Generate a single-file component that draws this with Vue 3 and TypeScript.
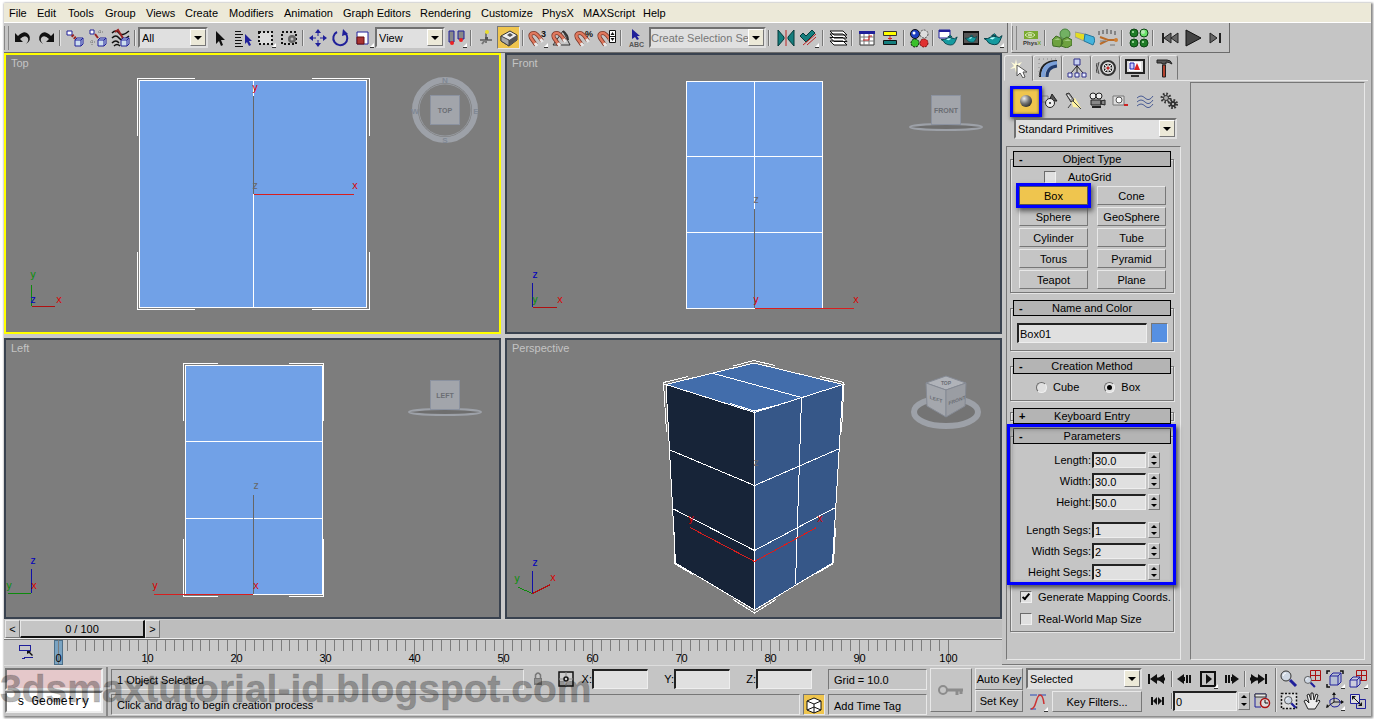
<script setup lang="ts">
import { ref } from 'vue'

const menus = ['File', 'Edit', 'Tools', 'Group', 'Views', 'Create', 'Modifiers', 'Animation', 'Graph Editors', 'Rendering', 'Customize', 'PhysX', 'MAXScript', 'Help']

const fly = '<path d="M20 15v4h-4z" fill="#fff"/><path d="M20 19v1h-4v-1z" fill="#333"/>'
const magnet = '<g fill="none"><path d="M8 17L3 10Q1 5 6 5Q9 5 14 13" stroke="#7a3526" stroke-width="4"/><path d="M8 17L3 10Q1 5 6 5Q9 5 14 13" stroke="#e0795e" stroke-width="2.500"/><path d="M7 15l2 3M12.500 11l2 3" stroke="#e8e8e8" stroke-width="3"/></g>'
const teapot = '<path d="M4 10Q10 6 16 9l3-2-2 5Q15 18 8 16Q4 15 3 12L0 10z" fill="#159a9f" stroke="#063f48"/><path d="M8 7l3-2 2 2z" fill="#1aa" stroke="#063f48"/><path d="M6 10q3-2 6-1l-3 2z" fill="#b8ffff"/>'
const lens = '<path d="M11 11l6 6" stroke="#20209a" stroke-width="3"/><circle cx="7" cy="7" r="5" fill="#cfd8e4" stroke="#333" /><path d="M4 7q1-3 3-3" stroke="#fff" fill="none"/>'

const icons: Record<string, string> = {
  undo: '<path d="M2 5v9h8l-3-3q4-4 7-2q3 3-1 7q6-4 3-9q-4-6-11 1z" fill="#111"/>',
  redo: '<path d="M18 5v9h-8l3-3q-4-4-7-2q-3 3 1 7q-6-4-3-9q4-6 11 1z" fill="#111"/>',
  link: '<path d="M2 3h5v4H2z" fill="#fff" stroke="#20209a"/><path d="M7 7l6 6" stroke="#922" stroke-width="3" stroke-dasharray="2 1"/><path d="M10 12h6v6h-6zM10 12l2-2h6v6l-2 2M16 12l2-2" fill="#cde" stroke="#20209a"/>',
  unlink: '<path d="M2 2h4v4H2z" fill="#fff" stroke="#20209a"/><path d="M7 6l3 4" stroke="#922" stroke-width="2"/><path d="M12 2v4M10 4h5M4 12v5M2 14h5" stroke="#777" stroke-dasharray="1 1"/><path d="M10 12h6v6h-6zM10 12l2-2h6v6l-2 2M16 12l2-2" fill="#cde" stroke="#20209a"/>',
  bind: '<path d="M1 5q4-4 7 0t10-2M1 10q4-4 7 0t10-2M1 15q4-4 7 0M3 18q3-3 6 0" fill="none" stroke="#111" stroke-width="1.500"/><path d="M4 4l3-2 6 10" stroke="#922" stroke-width="2" fill="none"/><path d="M10 12h6v6h-6zM10 12l2-2h6v6l-2 2M16 12l2-2" fill="#cde" stroke="#20209a"/>',
  arrow: '<path d="M6 3v13l3-3 2 5 2-1-2-5h4z" fill="#111"/>',
  list: '<path d="M2 3h6M2 6h8M2 9h6M2 12h7M2 15h6M2 18h8" stroke="#111" stroke-width="1" shape-rendering="crispEdges"/><path d="M12 6v10l2-2 2 4 2-1-2-4h3z" fill="#20209a"/>',
  rect: '<path d="M3 4h13v12H3z" fill="#ddd" stroke="#111" stroke-width="2" stroke-dasharray="2 2"/>' + fly,
  winsel: '<path d="M3 4h14v12H3z" fill="none" stroke="#111" stroke-width="2" stroke-dasharray="2 2"/><circle cx="13" cy="11" r="4" fill="#666"/><circle cx="13" cy="11" r="1.500" fill="#bbb"/>',
  move: '<path d="M10 3v5M10 12v5M3 10h5M12 10h5" stroke="#20209a"/><path d="M10 1l3 4H7zM10 19l3-4H7zM1 10l4-3v6zM19 10l-4-3v6z" fill="#20209a"/>',
  rotate: '<path d="M14 5A7 7 0 1 1 6 4" fill="none" stroke="#20209a" stroke-width="2"/><path d="M12 1l5 5-6 2z" fill="#20209a"/>',
  scale: '<path d="M3 4h11v12H3z" fill="#fff" stroke="#20209a"/><path d="M3 9h7v7H3z" fill="#a33" stroke="#611"/>' + fly,
  pivot: '<path d="M2 3h5v11H2zM11 3h6v8h-6z" fill="#888" stroke="#20209a"/><circle cx="5" cy="15" r="2" fill="#e22"/><circle cx="14" cy="12" r="2" fill="#e22"/>' + fly,
  manip: '<path d="M10 5v10M4 12h12M6 16l3-4" stroke="#777" stroke-width="2"/><circle cx="11" cy="4" r="2" fill="#e8dc2c"/><path d="M9 9h3v3H9z" fill="#555"/>',
  key: '<path d="M2 8l9-5 7 4v5l-8 6-8-5z" fill="#eee" stroke="#333"/><path d="M10 12l8-5v5l-8 6z" fill="#555"/><path d="M2 8l8 4v6l-8-5z" fill="#aaa" stroke="#444"/><path d="M8 7l3-2 3 2-3 2z" fill="#555"/>',
  snap3: magnet + '<text x="13" y="9" font-size="9" font-weight="bold" fill="#111">3</text>' + fly,
  snapA: '<path d="M2 17L12 3l7 14z" fill="none" stroke="#333"/><path d="M12 3q5 4 5 9" fill="none" stroke="#333" stroke-width="2"/>' + magnet,
  snapP: magnet + '<text x="11" y="9" font-size="9" font-weight="bold" fill="#111">%</text>',
  snapS: magnet + '<path d="M12.500 2.500h6v12h-6zM12 8.500h7" fill="#fff" stroke="#111"/><path d="M13.500 7l2-3 2 3zM13.500 10l2 3 2-3z" fill="#111"/>',
  abc: '<path d="M6 1v10l3-2 2 3 2-1-2-3h3z" fill="#20209a"/><text x="3" y="19" font-size="7" font-weight="bold" fill="#555">ABC</text>',
  mirror: '<path d="M2 2l6 7v2l-6 7z" fill="#157e7e" stroke="#053a3a"/><path d="M18 2l-6 7v2l6 7z" fill="#157e7e" stroke="#053a3a"/><path d="M10 2v16" stroke="#b22"/>',
  align: '<path d="M1 8l3-3 3 3 6-6 3 3-9 9z" fill="#157e7e" stroke="#053a3a"/><path d="M4 17L17 6M8 17l9-8" stroke="#b22"/>' + fly,
  layers: '<path d="M2 13l4 4h13l-4-4zM2 9.500l4 4h13l-4-4zM2 6l4 4h13l-4-4zM2 3l4 4h13l-4-4z" fill="#fff" stroke="#111"/>',
  curve: '<path d="M3 4h14v13H3z" fill="#fff" stroke="#333"/><path d="M2 3h16v3H2z" fill="#20209a"/><path d="M3 9h14M3 13h14M7 6v11M12 6v11" stroke="#777"/><path d="M6 12h6V8h3" stroke="#c22" fill="none"/>',
  schem: '<path d="M3.500 3.500h13v4h-13z" fill="#ff0" stroke="#333"/><path d="M3.500 12.500h13v4h-13z" fill="#157e7e" stroke="#111"/><path d="M10 8v4M8 10.500h4" stroke="#c22"/>',
  mat: '<circle cx="6" cy="6" r="4.500" fill="#1d3fc0" stroke="#111"/><circle cx="15" cy="6" r="4" fill="#ddd" stroke="#555" stroke-dasharray="2 1"/><circle cx="6" cy="15" r="4" fill="#3ac12b" stroke="#111" stroke-dasharray="2 1"/><circle cx="15" cy="15" r="4" fill="#e03030" stroke="#711" stroke-dasharray="2 1"/><circle cx="5" cy="5" r="1.500" fill="#fff"/>',
  rset: '<path d="M1 2h11v8H1z" fill="#fff" stroke="#20209a"/><path d="M1 2h11v2H1z" fill="#20209a"/><g transform="translate(3 3) scale(.85)">' + teapot + '</g>',
  rwin: '<path d="M2 3h16v14H2z" fill="#111"/><path d="M3 5h14v10H3z" fill="#555"/><g transform="translate(4 4) scale(.62)">' + teapot + '</g>',
  rend: '<g transform="translate(0 1) scale(.95)">' + teapot + '</g>' + fly,
  physx: '<path d="M3 3h14v8H3z" fill="#79a92f"/><path d="M4 7q5-5 10 0q-5 5-10 0m3 0q2-2 4 0q-2 2-4 0" fill="none" stroke="#dcebb8"/><text x="2" y="17" font-size="6" font-weight="bold" fill="#333">Phys<tspan fill="#79a92f">X</tspan></text>',
  rocks: '<circle cx="13" cy="6" r="5" fill="#72b163" stroke="#47823c"/><path d="M0 12l4-4 5 2 2 5-3 4-7-1zM10 12l5-3 5 3v5l-5 3-6-2z" fill="#6ea23f" stroke="#3f6d25"/><path d="M2 12l4-2 2 2zM12 13l4-2 3 2z" fill="#a0c97f"/>',
  cloth: '<path d="M0 4l10 2-1 7-9-4z" fill="#e3dc23" stroke="#999"/><path d="M10 6l9 3q2 4-1 8l-9-4z" fill="#44b4dd" stroke="#26779a"/>',
  rag: '<path d="M1 3v4M5 2v4M9 1v5M13 2v4M17 3v4" stroke="#444"/><path d="M2 9l8 3h7M2 16l8-4M10 12h4" stroke="#bb6c28" stroke-width="2" fill="none"/><path d="M2 13h6M12 17h5" stroke="#777"/><circle cx="18" cy="12" r="2" fill="#cf7f33"/>',
  balls: '<g fill="#1f7c27" stroke="#0b4413"><circle cx="5" cy="5" r="4"/><circle cx="15" cy="5" r="4" fill="#6be36a"/><circle cx="5" cy="15" r="4"/><circle cx="15" cy="15" r="4"/></g><g fill="#b9e8b5"><circle cx="4" cy="4" r="1"/><circle cx="14" cy="4" r="2"/><circle cx="4" cy="14" r="1"/><circle cx="14" cy="14" r="1"/></g>',
  prewind: '<path d="M3 5v10" stroke="#222" stroke-width="2"/><path d="M11 5v10l-7-5zM18 5v10l-7-5z" fill="#666" stroke="#222"/>',
  pplay: '<path d="M3 2l15 8-15 8z" fill="#444" stroke="#111"/>',
  pstep: '<path d="M4 5v10l7-5z" fill="#666" stroke="#222"/><path d="M14 5v10" stroke="#222" stroke-width="2"/>',
  create: '<path d="M7 1l1 5 5-2-3 4 4 3-5-1-2 5-1-5-5 1 4-3-3-4 4 2z" fill="#fffbd8"/><path d="M8 7v11l3-3 3 5 2-1-2-5h4z" fill="#fff" stroke="#555"/>',
  modify: '<path d="M2 19Q2 3 19 3" fill="none" stroke="#222" stroke-width="2"/><path d="M5 19Q5 6 19 5" fill="none" stroke="#7ba0d8" stroke-width="4"/><path d="M9 19Q9 9 19 8" fill="none" stroke="#213a6a" stroke-width="3"/><path d="M1 1v18M1 1h18" stroke="#888" stroke-dasharray="1 3"/>',
  hier: '<path d="M7 1h6v6H7z" fill="#c7d0f0" stroke="#30308a"/><path d="M10 7v8M10 8l-6 7M10 8l6 7" stroke="#222"/><path d="M1 15h4v4H1zM8 15h4v4H8zM15 15h4v4h-4z" fill="#e8ecff" stroke="#30308a"/>',
  motion: '<circle cx="12" cy="10" r="7" fill="#ddd" stroke="#333" stroke-width="2"/><circle cx="12" cy="10" r="4" fill="#888" stroke="#111"/><path d="M12 5v10M7 10h10M8 6l8 8M16 6l-8 8" stroke="#eee"/><circle cx="12" cy="10" r="1.500" fill="#c22"/><path d="M3 4q-3 6 0 12M1 5q-2 5 0 10" stroke="#444" fill="none"/>',
  display: '<path d="M1 2h18v13H1z" fill="#ddd" stroke="#222" stroke-width="2"/><path d="M4 4h12v9H4z" fill="#fff"/><path d="M5 5h4v6H5z" fill="#ccf" stroke="#22a"/><path d="M12 5l3 7h-6z" fill="#d22"/><path d="M6 17h8v2H6z" fill="#333"/>',
  util: '<path d="M3 2h10q4 0 5 4-3-2-6-2v2H8V5H3z" fill="#555" stroke="#222"/><path d="M8.500 7h3v12h-3z" fill="#b7432f" stroke="#222"/>',
  sphere: '<defs><radialGradient id="ball" cx=".35" cy=".3" r=".8"><stop offset="0" stop-color="#eee"/><stop offset=".5" stop-color="#777"/><stop offset="1" stop-color="#222"/></radialGradient></defs><circle cx="10" cy="10" r="6" fill="url(#ball)"/>',
  shapes: '<path d="M2 5h6v6H2z" fill="#ccc" stroke="#888"/><path d="M12 3l5 7H9z" fill="#555" stroke="#222"/><circle cx="10" cy="12" r="4.500" fill="#eee" stroke="#222"/><circle cx="10" cy="12" r="1" fill="#222"/>',
  light: '<path d="M7 9l4-2 6 10-8-1z" fill="#fff2a0"/><path d="M2 3l3-1 5 7-3 2z" fill="#999" stroke="#333"/><path d="M9 10l8 8M4 17l3-4" stroke="#444"/><path d="M4 4l3 4" stroke="#fff"/>',
  camera: '<circle cx="6" cy="5" r="3" fill="#eee" stroke="#222"/><circle cx="12" cy="5" r="3" fill="#eee" stroke="#222"/><path d="M4 9h10v5H4zM14 10l4-1v5l-4-1z" fill="#888" stroke="#222"/><path d="M5 16h9" stroke="#222" stroke-width="2"/>',
  helper: '<path d="M2 5h11v9H2z" fill="#ddd" stroke="#777"/><circle cx="8" cy="9" r="3" fill="#fff" stroke="#555"/><path d="M13 14h4" stroke="#c22" stroke-width="2"/>',
  waves: '<path d="M2 7q4-4 8 0t8-2M2 11q4-4 8 0t8-2M2 15q4-4 8 0t8-2" fill="none" stroke="#4a5c94"/>',
  gears: '<g fill="none" stroke="#333"><circle cx="7" cy="7" r="4" stroke-width="3" stroke-dasharray="1.500 1.600"/><circle cx="7" cy="7" r="2.500" fill="#aaa"/><circle cx="14" cy="13" r="3.500" stroke-width="3" stroke-dasharray="1.500 1.250"/><circle cx="14" cy="13" r="2" fill="#ddd" stroke-width="2"/></g>',
  trackopen: '<g shape-rendering="crispEdges" fill="none" stroke="#20209a"><path d="M3 4h11v5H3z"/><path d="M6 17h3M8 16h9"/></g><path d="M11 10h4l-1 1 3 3-1 1-3-3-2 1z" fill="#111"/>',
  lock: '<path d="M7.500 9V6q2.500-4 5 0v3" fill="none" stroke="#777" stroke-width="1.500"/><path d="M6 9h8v7H6z" fill="#777"/><path d="M7 11h6M7 13h6" stroke="#aaa"/>',
  abs: '<path d="M3 3h14v14H3z" fill="#ccc" stroke="#111" stroke-width="1.500"/><path d="M3 10h14M10 3v4M10 13v4" stroke="#888"/><circle cx="10" cy="10" r="2" fill="#ccc" stroke="#111" stroke-width="1.500"/>',
  cube: '<path d="M3 6l7-3 7 3v9l-7 3-7-3z" fill="#fff" stroke="#111"/><path d="M3 6l7 3 7-3M10 9v9M10 12l-7 3M10 12l7 3" stroke="#111" fill="none"/>',
  tangent: '<path d="M2 3h7M10 3h8M2 17h6" stroke="#2a4ab5"/><path d="M3 17q3 0 5-7t4-7q3 0 4 9" fill="none" stroke="#c33" stroke-width="1.500"/>' + fly,
  first: '<path d="M2 5v10" stroke="#111" stroke-width="2"/><path d="M10 5v10l-7-5zM17 5v10l-7-5z" fill="#111"/><path d="M9 10h9" stroke="#111" stroke-width="3"/>',
  last: '<path d="M18 5v10" stroke="#111" stroke-width="2"/><path d="M10 5v10l7-5zM3 5v10l7-5z" fill="#111"/><path d="M2 10h9" stroke="#111" stroke-width="3"/>',
  prev: '<path d="M9 5v10l-7-5z" fill="#111"/><path d="M7 10h3" stroke="#111" stroke-width="4"/><path d="M12 6v8M15 6v8" stroke="#111" stroke-width="2"/>',
  next: '<path d="M11 5v10l7-5z" fill="#111"/><path d="M10 10h3" stroke="#111" stroke-width="4"/><path d="M8 6v8M5 6v8" stroke="#111" stroke-width="2"/>',
  play: '<path d="M3 3h14v14H3z" fill="none" stroke="#111" stroke-width="2"/><path d="M8 5v10l6-5z" fill="#111"/>' + fly,
  keymode: '<path d="M5 6v8M16 6v8" stroke="#111" stroke-width="2"/><path d="M10 6v8l-4-4zM11 6v8l4-4z" fill="#111"/>',
  timecfg: '<path d="M14 8V3H3v13h6" fill="none" stroke="#20209a"/><path d="M3 3h11v3H3z" fill="#e8e8e8" stroke="#333"/><circle cx="13" cy="12" r="4.500" fill="#ddd" stroke="#a11" stroke-width="1.500"/><path d="M13 9v3h3" stroke="#111" fill="none"/>',
  zoom: lens,
  zoomall: '<path d="M8.500 1.500h10v10h-10zM13.500 1v11M8 6.500h11" fill="none" stroke="#a11"/><g transform="translate(1 6) scale(.7)">' + lens + '</g>',
  extents: '<path d="M5 7h8v9H5zM5 7l3-3h8v9l-3 3M13 7l3-3" fill="#b6bfd4" stroke="#20209a"/><path d="M2 5V2h3M15 2h3v3M2 15v3h3" fill="none" stroke="#111" stroke-width="1.500"/>' + fly,
  extall: '<path d="M8.500 1.500h10v10h-10zM13.500 1v11M8 6.500h11" fill="none" stroke="#a11"/><path d="M2 11h7v7H2zM2 11l3-3h7v7l-3 3M9 11l3-3" fill="#ccd" stroke="#20209a"/>' + fly,
  region: '<path d="M2.500 2.500h15v15h-15z" fill="#ddd" stroke="#111" stroke-width="1.500" stroke-dasharray="2 1.500"/><g transform="translate(4 4) scale(.75)">' + lens + '</g>',
  pan: '<path d="M6 18L2 10l2-1 3 3L5 4l2-1 2 6V2h2l1 7 2-6 2 1-2 7 3-2 1 1-5 8z" fill="#eee" stroke="#222"/>',
  orbit: '<path d="M9 2v9l-7 5M9 11h9" fill="none" stroke="#111"/><path d="M5 9q6-4 10 1q1 6-6 6q-5-1-4-7" fill="none" stroke="#20209a"/><path d="M9 1l2 3H7zM19 11l-3-2v4zM1 17l1-4 2 3z" fill="#111"/>' + fly,
  maxview: '<path d="M2.500 3.500h9v9h-9z" fill="#ddd" stroke="#20209a"/><path d="M12 8.500h5.500v9h-9V13" fill="none" stroke="#20209a"/><path d="M5 6l8 8" stroke="#111"/><path d="M4 5h4l-4 4zM14 15h-4l4-4z" fill="#111"/>'
}

// Main toolbar: icon names, '|' is a separator, '||' a wide one, '*' marks a combo
const barA = ['undo', 'redo', '|', 'link', 'unlink', 'bind', '|', '*All', 'arrow', 'list', 'rect', 'winsel', '|', 'move', 'rotate', 'scale', '*View', 'pivot', '|', 'manip', 'key', '|', 'snap3', 'snapA', 'snapP', 'snapS', '|', 'abc', '*Create Selection Set', '||', 'mirror', 'align', '|', 'layers', '|', 'curve', 'schem', '|', 'mat', '|', 'rset', 'rwin', 'rend']
const barB = ['physx', '||', 'rocks', 'cloth', 'rag', '||', 'balls', '||', 'prewind', 'pplay', 'pstep']
const tabs = ['create', 'modify', 'hier', 'motion', 'display', 'util']
const cats = ['sphere', 'shapes', 'light', 'camera', 'helper', 'waves', 'gears']
const primitives = ['Box', 'Cone', 'Sphere', 'GeoSphere', 'Cylinder', 'Tube', 'Torus', 'Pyramid', 'Teapot', 'Plane']
const selected = ref('Box')
const objectName = ref('Box01')
const method = ref('Box')
const mapping = ref(true)
const realWorld = ref(false)
const autoGrid = ref(false)
const params = ref([
  { id: 'length', label: 'Length:', value: '30.0' },
  { id: 'width', label: 'Width:', value: '30.0' },
  { id: 'height', label: 'Height:', value: '50.0' },
  { id: 'lsegs', label: 'Length Segs:', value: '1' },
  { id: 'wsegs', label: 'Width Segs:', value: '2' },
  { id: 'hsegs', label: 'Height Segs:', value: '3' }
])
const ticks = Array.from({ length: 101 }, (_, i) => ({ n: i, x: Math.round(58 + i * 8.9) + 0.5, major: i % 10 === 0 }))
const nav = ['zoom', 'zoomall', 'extents', 'extall', 'region', 'pan', 'orbit', 'maxview']
</script>

<template>
  <div class="page">
    <div class="win">
      <nav class="menu">
        <button v-for="m in menus" :key="m" type="button">{{ m }}</button>
      </nav>

      <div class="bars">
        <div class="bar">
          <i class="grip"></i>
          <template v-for="(t, i) in barA" :key="i">
            <i v-if="t[0] === '|'" class="sep" :class="{ wide: t === '||' }"></i>
            <span v-else-if="t[0] === '*'" class="combo" :class="{ long: t.length > 8 }">
              <select :aria-label="t.slice(1)"><option>{{ t.slice(1) }}</option></select>
            </span>
            <button v-else type="button" class="tool" :class="{ down: t === 'key' }" :aria-label="t">
              <svg viewBox="0 0 20 20" v-html="icons[t]"></svg>
            </button>
          </template>
        </div>
        <div class="bar">
          <i class="grip"></i>
          <template v-for="(t, i) in barB" :key="i">
            <i v-if="t[0] === '|'" class="sep wide"></i>
            <button v-else type="button" class="tool" :aria-label="t">
              <svg viewBox="0 0 20 20" v-html="icons[t]"></svg>
            </button>
          </template>
        </div>
      </div>

      <div class="main">
        <div class="left">
          <div class="views">
            <section class="view active">
              <span class="vname">Top</span>
              <svg viewBox="6 55 493 277">
                <rect x="139.5" y="80.5" width="227" height="227" class="face" />
                <path class="wire" d="M253.500 80v228M137.500 136V78.500H195M312 78.500h57.500V136M137.500 252v57.500H195M312 309.500h57.500V252" />
                <path class="gz" d="M253.500 96v98" /><path class="gr" d="M254 194.500h100" />
                <path class="wire" d="M253.500 88v5" />
                <text x="252" y="91" class="r">y</text><text x="352" y="189" class="r">x</text><text x="252" y="189" class="g">z</text>
                <path class="tg" d="M31.500 285v21" /><path class="tr" d="M32 306.500h23" />
                <text x="30" y="278" class="gn">y</text><text x="30" y="303" class="b">z</text><text x="56" y="303" class="r">x</text>
                <g class="smooth">
                  <circle cx="445" cy="110" r="30" fill="none" stroke="#9da1a8" stroke-width="6" />
                  <circle cx="445" cy="110" r="26" fill="none" stroke="#969aa0" />
                  <rect x="430.5" y="95.500" width="29" height="29" class="cube" />
                  <text x="445" y="113" class="ct">TOP</text>
                  <text x="445" y="83" class="cp">N</text><text x="476" y="114" class="cp">E</text><text x="445" y="143" class="cp">S</text><text x="415" y="114" class="cp">W</text>
                </g>
              </svg>
            </section>
            <section class="view">
              <span class="vname">Front</span>
              <svg viewBox="507 55 493 277">
                <rect x="686.500" y="81.500" width="136" height="227" class="face" />
                <path class="wire" d="M754.500 81v228M686 156.500h137M686 232.500h137" />
                <path class="gz" d="M754.500 209v99" /><path class="gr" d="M755 308.500h99" />
                <text x="753" y="203" class="g">z</text><text x="753" y="303" class="r">y</text><text x="853" y="303" class="r">x</text>
                <path class="tb" d="M532.500 283v24" /><path class="tr" d="M533 307.500h24" />
                <text x="532" y="278" class="b">z</text><text x="532" y="303" class="gn">y</text><text x="557" y="303" class="r">x</text>
                <g class="smooth">
                  <ellipse cx="946" cy="127" rx="36" ry="3" class="ring" />
                  <rect x="931.500" y="95.500" width="29" height="29" class="cube" />
                  <text x="946" y="113" class="ct">FRONT</text>
                </g>
              </svg>
            </section>
            <section class="view">
              <span class="vname">Left</span>
              <svg viewBox="6 340 493 277">
                <rect x="185.500" y="365.500" width="137" height="229" class="face" />
                <path class="wire" d="M185 441.500h138M185 518.500h138M183.500 421v-57.500H218M289 363.500h34.500V421M183.500 539v57.500H218M289 596.500h34.500V539" />
                <path class="gz" d="M253.500 495v99" /><path class="gr" d="M154 594.500h99" />
                <text x="253" y="489" class="g">z</text><text x="152" y="589" class="r">y</text><text x="253" y="589" class="r">x</text>
                <path class="tb" d="M31.500 569v24" /><path class="tg" d="M8 593.500h23" />
                <text x="30" y="564" class="b">z</text><text x="6" y="589" class="gn">y</text><text x="31" y="589" class="r">x</text>
                <g class="smooth">
                  <ellipse cx="445" cy="412" rx="36" ry="3" class="ring" />
                  <rect x="430.500" y="380.500" width="29" height="29" class="cube" />
                  <text x="445" y="398" class="ct">LEFT</text>
                </g>
              </svg>
            </section>
            <section class="view">
              <span class="vname">Perspective</span>
              <svg viewBox="507 340 493 277">
                <path d="M666 384.500L754 363l89 21.500-88.500 28z" fill="#426dab" />
                <path d="M666 384.500l88.500 28V610l-79-47z" fill="#172438" />
                <path d="M843 384.500l-88.500 28V610l78-47z" fill="#365788" />
                <path class="wire" d="M666 384.500L754 363l89 21.500-88.500 28zL675.500 563l79 47 78-47L843 384.500M754.500 412V610M713.500 373.500l88 24-6 186.500M670 450l84.500 35.500 84-36.500M673.500 509l81 41.500 80-42.500" />
                <path class="wire" d="M666.500 432l-3-49.500 24.500-6M733 366l21-5.500 21 5M820 376.500l24 6-2.500 49.500M674 532l1 32 18 10.500M733 599.500l21.500 13.500 21.500-13.500M816.500 573.500l17-10 2-35M730 403.500l24.500 7.500 24-6" />
                <path class="gr" d="M690 527.500l64.500 34 62-34" />
                <text x="688" y="522" class="r">y</text><text x="817" y="522" class="r">x</text><text x="753" y="466" class="g">z</text>
                <path class="tb" d="M532.500 571v23" /><path class="tg" d="M532.500 593.500l-14-6" /><path class="tr" d="M532.500 593.500l18-9" />
                <text x="532" y="566" class="b">z</text><text x="514" y="582" class="gn">y</text><text x="550" y="581" class="r">x</text>
                <g class="smooth">
                  <ellipse cx="946" cy="412" rx="32" ry="14" fill="#747474" stroke="#9da1a8" stroke-width="6" />
                  <path d="M926 383l20-7 20 7-20 7z" fill="#b0b3b9" stroke="#858a94" />
                  <path d="M926 383l20 7v27l-19-11z" fill="#a4a7ad" stroke="#858a94" />
                  <path d="M966 383l-20 7v27l19-11z" fill="#9a9da3" stroke="#858a94" />
                  <text class="ct tiny" transform="matrix(1 .35 0 1 936 401)">LEFT</text>
                  <text class="ct tiny" transform="matrix(1 -.35 0 1 957 402)">FRONT</text>
                  <text class="ct tiny" x="946" y="385">TOP</text>
                </g>
              </svg>
            </section>
          </div>
          <div class="slider">
            <button type="button">&lt;</button>
            <button type="button" class="thumb">0 / 100</button>
            <button type="button">&gt;</button>
          </div>
          <div class="track">
            <svg viewBox="4 640 998 25">
              <svg x="16" y="641" width="20" height="20" viewBox="0 0 20 20" v-html="icons.trackopen"></svg>
              <rect x="54.500" y="640.500" width="8" height="24" fill="#79a3c2" stroke="#4d6f88" />
              <path v-for="t in ticks" :key="t.n" :d="`M${t.x} 640v${t.major ? 24 : 11}`" stroke="#7c7c7c" />
              <text v-for="t in ticks.filter(k => k.major)" :key="'n' + t.n" :x="t.x" y="662">{{ t.n }}</text>
            </svg>
          </div>
        </div>

        <aside class="right">
          <div class="tabs">
            <button v-for="(t, i) in tabs" :key="t" type="button" class="tab" :class="{ on: i === 0 }" :aria-label="t">
              <svg viewBox="0 0 20 20" v-html="icons[t]"></svg>
            </button>
          </div>
          <div class="cols">
            <div class="command">
              <div class="cats">
                <button v-for="(c, i) in cats" :key="c" type="button" class="cat" :class="{ on: i === 0 }" :aria-label="c">
                  <svg viewBox="0 0 20 20" v-html="icons[c]"></svg>
                </button>
              </div>
              <span class="combo prim"><select aria-label="Category"><option>Standard Primitives</option></select></span>
              <div class="panel">
                <section class="roll">
                  <button type="button" class="head"><b>-</b>Object Type</button>
                  <label class="check auto"><input v-model="autoGrid" type="checkbox">AutoGrid</label>
                  <div class="types">
                    <button v-for="p in primitives" :key="p" type="button" class="btn" :class="{ on: selected === p }" @click="selected = p">{{ p }}</button>
                  </div>
                </section>
                <section class="roll">
                  <button type="button" class="head"><b>-</b>Name and Color</button>
                  <div class="namerow">
                    <input v-model="objectName" type="text" class="field" aria-label="Object name">
                    <button type="button" class="swatch" aria-label="Object color"></button>
                  </div>
                </section>
                <section class="roll">
                  <button type="button" class="head"><b>-</b>Creation Method</button>
                  <div class="radios">
                    <label class="check"><input v-model="method" type="radio" value="Cube">Cube</label>
                    <label class="check"><input v-model="method" type="radio" value="Box">Box</label>
                  </div>
                </section>
                <section class="roll closed">
                  <button type="button" class="head"><b>+</b>Keyboard Entry</button>
                </section>
                <section class="roll">
                  <div class="marked">
                    <button type="button" class="head"><b>-</b>Parameters</button>
                    <div class="params">
                      <div v-for="p in params" :key="p.id" class="param">
                        <label :for="p.id">{{ p.label }}</label>
                        <input :id="p.id" v-model="p.value" type="text" class="field">
                        <span class="spin"><button type="button" aria-label="Increase"></button><button type="button" aria-label="Decrease"></button></span>
                      </div>
                    </div>
                  </div>
                  <div class="options">
                    <label class="check"><input v-model="mapping" type="checkbox">Generate Mapping Coords.</label>
                    <label class="check"><input v-model="realWorld" type="checkbox">Real-World Map Size</label>
                  </div>
                </section>
              </div>
            </div>
            <div class="blank"></div>
          </div>
        </aside>
      </div>

      <footer class="status">
        <div class="listener">
          <input type="text" class="pink" aria-label="Macro recorder">
          <input type="text" value=" s Geometry" aria-label="Script listener">
        </div>
        <i class="divider"></i>
        <div class="prompt">
          <div class="coords">
            <output class="box">1 Object Selected</output>
            <button type="button" class="tool" aria-label="Lock selection"><svg viewBox="0 0 20 20" v-html="icons.lock"></svg></button>
            <button type="button" class="tool" aria-label="Absolute mode"><svg viewBox="0 0 20 20" v-html="icons.abs"></svg></button>
            <label for="cx">X:</label><input id="cx" type="text" class="field">
            <label for="cy">Y:</label><input id="cy" type="text" class="field">
            <label for="cz">Z:</label><input id="cz" type="text" class="field">
          </div>
          <div class="hint">
            <output class="box">Click and drag to begin creation process</output>
            <button type="button" class="tool down" aria-label="Adaptive degradation"><svg viewBox="0 0 20 20" v-html="icons.cube"></svg></button>
          </div>
        </div>
        <div class="info">
          <output class="box">Grid = 10.0</output>
          <button type="button" class="box">Add Time Tag</button>
        </div>
        <button type="button" class="btn bigkey" aria-label="Set keys">
          <svg viewBox="0 0 26 14"><circle cx="5" cy="7" r="4" fill="none" stroke="#8c8c8c" stroke-width="2" /><path d="M9 7h16M19 7v5M23 7v4" stroke="#8c8c8c" stroke-width="3" fill="none" /></svg>
        </button>
        <div class="two">
          <button type="button" class="btn">Auto Key</button>
          <button type="button" class="btn">Set Key</button>
        </div>
        <div class="two">
          <span class="combo fill"><select aria-label="Key set"><option>Selected</option></select></span>
          <div class="filters">
            <button type="button" class="tool" aria-label="Tangent type"><svg viewBox="0 0 20 20" v-html="icons.tangent"></svg></button>
            <button type="button" class="btn">Key Filters...</button>
          </div>
        </div>
        <div class="transport">
          <div class="time">
            <div class="trow">
              <button type="button" class="tool" aria-label="Go to start"><svg viewBox="0 0 20 20" v-html="icons.first"></svg></button>
              <i class="sep"></i>
              <button v-for="t in ['prev', 'play', 'next']" :key="t" type="button" class="tool" :aria-label="t"><svg viewBox="0 0 20 20" v-html="icons[t]"></svg></button>
              <i class="sep"></i>
              <button type="button" class="tool" aria-label="Go to end"><svg viewBox="0 0 20 20" v-html="icons.last"></svg></button>
            </div>
            <div class="trow">
              <button type="button" class="tool" aria-label="Key mode"><svg viewBox="0 0 20 20" v-html="icons.keymode"></svg></button>
              <i class="sep"></i>
              <input type="text" class="field frame" value="0" aria-label="Current frame">
              <span class="spin"><button type="button" aria-label="Increase"></button><button type="button" aria-label="Decrease"></button></span>
              <button type="button" class="tool" aria-label="Time configuration"><svg viewBox="0 0 20 20" v-html="icons.timecfg"></svg></button>
            </div>
          </div>
          <i class="sep tall"></i>
          <div class="nav">
            <button v-for="n in nav" :key="n" type="button" class="tool" :aria-label="n"><svg viewBox="0 0 20 20" v-html="icons[n]"></svg></button>
          </div>
        </div>
      </footer>
    </div>
    <div class="mark">3dsmaxtutorial-id.blogspot.com</div>
  </div>
</template>

<style>
body { background: #fff; }
</style>

<style scoped>
.page { position: relative; padding: 3px 3px 3px 4px; min-height: 100vh; box-sizing: border-box; display: flex; font: 11px/14px "Liberation Sans", Arial, sans-serif; color: #000; overflow: hidden; }
.page *, .page *::before, .page *::after { box-sizing: border-box; }
button, input, select, output { font: inherit; color: inherit; margin: 0; padding: 0; border: 0; border-radius: 0; background: none; min-width: 0; }
.win { flex: 1; min-width: 0; display: flex; flex-direction: column; background: #c5c5c5; box-shadow: 1px 1px 2px 1px #888; }
.menu { height: 20px; padding-left: 5px; background: #ece9d8; display: grid; grid-template-columns: 28px 31px 37px 41px 39px 44px 55px 59px 77px 61px 61px 41px 60px 40px; align-items: center; border-bottom: 1px solid #fff; }
.menu button { text-align: left; white-space: nowrap; }

.bars { display: flex; gap: 3px; height: 30px; }
.bar { display: flex; align-items: center; border: solid #6c6c6c; border-width: 0 1px 1px 0; background: #c5c5c5; padding-right: 2px; }
.bar + .bar { border-left: 1px solid #e8e8e8; }
.grip { width: 5px; height: 24px; margin-right: 2px; border: solid #888; border-width: 0 1px; }
.sep { width: 6px; height: 16px; position: relative; flex: none; }
.sep::before { content: ""; position: absolute; left: 2px; top: 0; bottom: 0; border-left: 1px solid #777; border-right: 1px solid #e4e4e4; }
.sep.wide { width: 8px; }
.tool { width: 23px; height: 23px; flex: none; display: flex; align-items: center; justify-content: center; }
.tool svg { width: 20px; height: 20px; display: block; }
.tool.down { background: #efc54e; border: solid; border-width: 1px; border-color: #777 #e8e8e8 #e8e8e8 #777; }

.combo { position: relative; display: block; width: 70px; height: 21px; border: 2px solid; border-color: #707070 #e0e0e0 #e0e0e0 #707070; background: #e0e0e0; flex: none; }
.combo select { appearance: none; width: 100%; height: 100%; padding: 0 18px 0 2px; display: block; }
.combo::before { content: ""; position: absolute; right: 0; top: 0; bottom: 0; width: 16px; background: #ece9d8; border: 1px solid; border-color: #fff #777 #777 #fff; pointer-events: none; }
.combo::after { content: ""; position: absolute; right: 4px; top: 7px; border: 4px solid transparent; border-top-color: #000; border-bottom: 0; pointer-events: none; }
.combo.long { width: 117px; margin-left: 2px; color: #777; }
.combo.long select { padding: 0; }

.main { flex: 1; display: grid; grid-template-columns: minmax(0, 1fr) 369px; }
.left { display: flex; flex-direction: column; min-width: 0; }
.views { flex: 1; display: grid; grid-template-columns: 1fr 1fr; grid-template-rows: 1fr 1fr; gap: 4px; padding-bottom: 1px; background: #c9c9c9; }
.view { position: relative; border: 2px solid #39424f; background: #7d7d7d; min-width: 0; min-height: 0; }
.view.active { border-color: #ff0; }
.view > svg { position: absolute; inset: 0; width: 100%; height: 100%; shape-rendering: crispEdges; }
.vname { position: absolute; left: 5px; top: 1px; color: #c4c4c4; }
.face { fill: #71a1e7; stroke: #fff; }
.wire { fill: none; stroke: #fff; }
.gz { stroke: #666; } .gr { stroke: #d81e1e; fill: none; }
.tr { stroke: #b01010; fill: none; } .tg { stroke: #0c8a0c; fill: none; } .tb { stroke: #1010a8; fill: none; }
.view text { font: 10px "DejaVu Sans Mono", monospace; }
text.r { fill: #d00; } text.g { fill: #666; } text.b { fill: #00b; } text.gn { fill: #0a900a; }
.smooth { shape-rendering: auto; }
.cube { fill: #a2a5ab; stroke: #8b92a0; }
.ring { fill: #6e6e6e; stroke: #9da1a8; stroke-width: 2; }
.view text.ct { font: bold 7px "Liberation Sans", sans-serif; fill: #6b6e74; text-anchor: middle; }
.view text.tiny { font-size: 5px; }
.view text.cp { font: bold 8px "Liberation Sans", sans-serif; fill: #808894; text-anchor: middle; }

.slider { height: 19px; display: flex; background: #bdbdbd; border-bottom: 1px solid #efefef; padding-left: 1px; }
.slider button { width: 15px; border: 1px solid; border-color: #e8e8e8 #777 #777 #e8e8e8; background: #c5c5c5; }
.slider .thumb { width: 125px; border-right: 2px solid #111; border-bottom: 2px solid #111; }
.track { height: 26px; border-top: 1px solid #777; background: #c9c9c9; }
.track > svg { display: block; width: 100%; height: 25px; }
.track text { font: 11px "Liberation Sans", sans-serif; text-anchor: middle; }

.right { display: flex; flex-direction: column; border-bottom: 1px solid #777; margin-left: 0; padding: 2px 3px 4px 2px; }
.tabs { display: flex; height: 26px; border-bottom: 1px solid #e8e8e8; }
.tab { width: 29px; display: flex; align-items: center; justify-content: center; border: 1px solid; border-color: #e8e8e8 #777 transparent #e8e8e8; border-radius: 3px 3px 0 0; }
.tab svg { width: 20px; height: 20px; }
.tab.on { margin-bottom: -1px; background: #c5c5c5; }
.cols { flex: 1; display: grid; grid-template-columns: 175px 1fr; column-gap: 9px; padding: 1px 3px 0 2px; }
.command { display: flex; flex-direction: column; padding-top: 3px; }
.cats { display: flex; gap: 0; padding-left: 4px; height: 32px; align-items: center; }
.cat { width: 24px; height: 25px; display: flex; align-items: center; justify-content: center; }
.cat svg { width: 20px; height: 20px; }
.cat.on { width: 32px; height: 31px; background: #efc54e; border: 3px solid #00f; box-shadow: 1px 2px 4px #444, inset 0 0 3px #444; margin-right: -4px; position: relative; }
.prim { width: 163px; margin: 1px 0 7px 8px; }
.panel { flex: 1; border: 1px solid; border-color: #777 #e8e8e8 #e8e8e8 #777; padding: 4px 6px 0 3px; }
.roll { position: relative; margin-bottom: 7px; }
.roll::before { content: ""; position: absolute; inset: 8px 0 0; border: 1px solid #777; box-shadow: inset 1px 1px #e4e4e4, 1px 1px #e4e4e4; pointer-events: none; }
.roll > * { position: relative; }
.roll.closed { margin-bottom: 4px; }
.roll.closed::before { inset: 4px 0 3px; }
.head { display: block; position: relative; width: calc(100% - 6px); height: 16px; line-height: 14px; margin: 0 3px; border: 1px solid #000; background: #b4b4b4; text-align: center; }
.head b { position: absolute; left: 5px; top: 0; }
.check { display: flex; align-items: center; height: 12px; gap: 6px; white-space: nowrap; }
.check input { appearance: none; width: 12px; height: 12px; flex: none; position: relative; background: #e0e0e0; border: solid; border-width: 1px; border-color: #6b6b6b #f0f0f0 #f0f0f0 #6b6b6b; }
.check input[type="checkbox"]:checked::after { content: ""; position: absolute; left: 3px; top: 0; width: 4px; height: 8px; border: solid #000; border-width: 0 2px 2px 0; transform: rotate(40deg); }
.check input[type="radio"] { width: 11px; height: 11px; border-radius: 50%; }
.check input[type="radio"]:checked::after { content: ""; position: absolute; inset: 2px; background: #000; border-radius: 50%; }
.auto { gap: 12px; padding: 0 0 0 34px; margin: 4px 0 3px; }
.types { display: grid; grid-template-columns: 1fr 1fr; grid-auto-rows: 19px; gap: 2px 9px; padding: 0 8px 4px 9px; }
.btn { background: #c5c5c5; border: 1px solid; border-color: #e8e8e8 #777 #777 #e8e8e8; text-align: center; white-space: nowrap; }
.types .btn.on { background: #efc54e; border-color: #555; outline: 3px solid #00f; box-shadow: 2px 3px 5px 3px #555; position: relative; z-index: 1; }
.field { border: 2px solid; border-color: #222 #eee #eee #222; border-width: 2px 1px 1px 2px; background: #e0e0e0; padding-left: 1px; display: block; }
.namerow { display: flex; gap: 4px; padding: 7px 6px 8px 7px; }
.namerow .field { flex: 1; height: 20px; }
.swatch { width: 17px; height: 20px; background: #5690e2; border: 1px solid; border-color: #777 #eee #eee #777; }
.radios { display: flex; padding: 7px 0 8px 26px; gap: 25px; }
.marked { position: relative; }
.marked::after { content: ""; position: absolute; inset: -4px -2px -5px -3px; border: 3px solid #00f; box-shadow: 2px 3px 4px #555, inset 1px 2px 4px #777; pointer-events: none; }
.params { padding: 8px 0 0; display: grid; gap: 5px; }
.param { display: grid; grid-template-columns: 81px 54px 12px; column-gap: 1px; height: 16px; align-items: center; }
.param label { text-align: right; white-space: nowrap; }
.param .field { width: 100%; height: 16px; }
.param:nth-child(4) { margin-top: 7px; }
.spin { display: flex; flex-direction: column; width: 12px; height: 16px; margin-left: 1px; border: 1px solid; border-color: #e8e8e8 #777 #777 #e8e8e8; }
.spin button { flex: 1; position: relative; }
.spin button::before { content: ""; position: absolute; left: 2px; top: 2px; border: 3px solid transparent; border-top: 0; border-bottom-color: #000; }
.spin button + button::before { border-top: 3px solid #000; border-bottom: 0; }
.options { display: grid; gap: 10px; padding: 11px 0 7px 10px; }
.blank { border: 1px solid; border-color: #777 #e8e8e8 #e8e8e8 #777; }

.status { height: 51px; border-top: 1px solid #ddd; padding: 2px 0 0 1px; display: grid; grid-template-columns: 98px 2px minmax(0, 1fr) 99px 42px 48px 116px 226px; column-gap: 3px; }
.listener { display: grid; grid-template-rows: 22px 22px; gap: 1px; }
.listener input { width: 100%; background: #fff; border: 2px solid; border-color: #777 #eee #eee #777; font: 12px "Liberation Mono", monospace; padding-left: 3px; }
.listener .pink { background: #e5c8ca; }
.divider { border: solid #888; border-width: 0 1px; margin-top: -1px; }
.prompt, .info { display: grid; grid-template-rows: 21px 21px; gap: 4px; padding-top: 1px; }
.box { display: block; border: 1px solid; border-color: #777 #e8e8e8 #e8e8e8 #777; padding: 3px 0 0 5px; text-align: left; white-space: nowrap; overflow: hidden; }
.coords { display: grid; grid-template-columns: minmax(0, 1fr) 28px 27px 13px 56px 26px 56px 26px 56px 13px; }
.coords .tool { width: 100%; height: 20px; }
.coords label { text-align: right; line-height: 20px; }
.coords .field { width: 100%; height: 20px; }
.hint { display: grid; grid-template-columns: minmax(0, 1fr) 22px; gap: 3px; }
.hint .tool { width: 22px; height: 21px; }
.bigkey { height: 44px; display: flex; align-items: center; justify-content: center; }
.bigkey svg { width: 26px; height: 14px; }
.two { display: grid; grid-template-rows: 22px 22px; }
.fill { width: 100%; }
.filters { display: grid; grid-template-columns: 24px 1fr; gap: 2px; align-items: center; }
.filters .btn { height: 21px; }
.transport { display: flex; height: 44px; }
.time { display: grid; grid-template-rows: 22px 22px; }
.trow { display: flex; align-items: center; }
.transport .sep { width: 4px; }
.transport .tall { height: 44px; }
.trow .frame { width: 64px; height: 20px; }
.trow .spin { height: 18px; }
.trow > .tool:first-child { width: 24px; }
.nav { display: grid; grid-template-columns: repeat(4, 23px); grid-template-rows: 22px 22px; }
.nav .tool { height: 22px; }

.mark { position: absolute; left: 0; bottom: 0; font: bold 39px/60px "Liberation Sans", Arial, sans-serif; color: rgba(0, 0, 0, .28); -webkit-text-stroke: 1px rgba(0, 0, 0, .12); pointer-events: none; white-space: nowrap; }
</style>
